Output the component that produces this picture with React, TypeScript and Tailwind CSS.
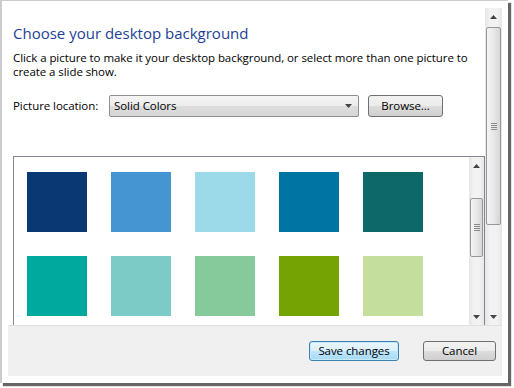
import React from "react";

const ROW_ONE = ["#0a3872", "#4495d1", "#9cd9e9", "#0074a2", "#0d6869"];
const ROW_TWO = ["#00a99d", "#7dcbc7", "#86c99a", "#74a303", "#c4de9e"];

const Arrow = ({ up }: { up: boolean }) => (
  <svg width="7" height="4" viewBox="0 0 7 4">
    <polygon points={up ? "0,4 7,4 3.5,0" : "0,0 7,0 3.5,4"} fill="#444" />
  </svg>
);

const Grip = () => (
  <div className="flex flex-col gap-[1px]">
    <div className="w-[6px] h-[1px] bg-[#8a8a8a]" />
    <div className="w-[6px] h-[1px] bg-[#8a8a8a]" />
    <div className="w-[6px] h-[1px] bg-[#8a8a8a]" />
    <div className="w-[6px] h-[1px] bg-[#8a8a8a]" />
  </div>
);

const ScrollBar = ({
  thumbTop,
  thumbHeight,
  className,
}: {
  thumbTop: number;
  thumbHeight: number;
  className: string;
}) => (
  <div className={`flex flex-col bg-[linear-gradient(90deg,#e6e6e6,#f2f2f2_30%,#f2f2f2_70%,#e6e6e6)] ${className}`}>
    <div className="h-[17px] flex items-center justify-center shrink-0">
      <Arrow up />
    </div>
    <div className="flex-1 px-[1px]">
      <div
        className="rounded-[2px] border border-[#979797] bg-[linear-gradient(90deg,#f4f4f4,#e8e8e8_50%,#d6d6d6)] flex items-center justify-center"
        style={{ marginTop: thumbTop, height: thumbHeight }}
      >
        <Grip />
      </div>
    </div>
    <div className="h-[17px] flex items-center justify-center shrink-0">
      <Arrow up={false} />
    </div>
  </div>
);

const Swatch = ({ color }: { color: string }) => (
  <div className="w-[60px] h-[60px]" style={{ backgroundColor: color }} />
);

export default function App() {
  return (
    <div className="w-[514px] h-[388px] bg-white overflow-hidden font-['Open_Sans',sans-serif] text-black">
      <div className="w-[508px] h-[383px] bg-white border-l-2 border-t border-[#cccccc] shadow-[3px_3px_1px_rgba(0,0,0,0.6)] flex flex-col px-[6px] pb-[7px]">
        <div className="flex flex-1 min-h-0">
          {/* main content */}
          <div className="flex-1 flex flex-col pl-[5px] pt-[22px]">
            <h1 className="text-[15px] leading-[20px] text-[#1e3f96]">
              Choose your desktop background
            </h1>
            <p className="mt-[8px] text-[11.5px] leading-[14px] tracking-[-0.07px] pr-[4px]">
              Click a picture to make it your desktop background, or select more than one picture to create a slide show.
            </p>
            <div className="mt-[16px] flex items-center h-[22px] text-[11.5px] tracking-[-0.07px]">
              <span className="w-[96px]">Picture location:</span>
              <div className="w-[250px] h-[22px] rounded-[2px] border border-[#8e8f8f] bg-[linear-gradient(180deg,#f5f5f5,#ececec_50%,#dddddd_51%,#d6d6d6)] flex items-center justify-between pl-[4px] pr-[6px]">
                <span>Solid Colors</span>
                <Arrow up={false} />
              </div>
              <div className="ml-[9px] w-[75px] h-[22px] rounded-[3px] border border-[#707070] bg-[linear-gradient(180deg,#f2f2f2,#ebebeb_50%,#dddddd_51%,#cfcfcf)] flex items-center justify-center">
                Browse...
              </div>
            </div>
            <div className="mt-[39px] flex-1 min-h-0 border-l border-t border-r border-[#828790] flex">
              <div className="flex-1 pl-[13px] pt-[15px] flex flex-col gap-[24px]">
                <div className="flex gap-[24px]">
                  {ROW_ONE.map((c) => (
                    <Swatch color={c} key={c} />
                  ))}
                </div>
                <div className="flex gap-[24px]">
                  {ROW_TWO.map((c) => (
                    <Swatch color={c} key={c} />
                  ))}
                </div>
              </div>
              <ScrollBar thumbTop={24} thumbHeight={59} className="w-[15px]" />
            </div>
          </div>
          {/* outer scroll bar */}
          <ScrollBar thumbTop={2} thumbHeight={198} className="w-[17px] mt-[7px]" />
        </div>
        {/* command area */}
        <div className="h-[51px] shrink-0 bg-[#f0f0f0] border-t border-[#dfdfdf] flex items-start justify-end gap-[24px] pt-[15px] pr-[6px] text-[11.5px] tracking-[-0.07px]">
          <div className="w-[90px] h-[20px] rounded-[3px] border border-[#3c7fb1] bg-[linear-gradient(180deg,#eaf6fd,#d9f0fc_50%,#bee6fd_51%,#a7d9f5)] shadow-[inset_0_0_0_1px_#c8e9fa] flex items-center justify-center">
            Save changes
          </div>
          <div className="w-[73px] h-[20px] rounded-[3px] border border-[#707070] bg-[linear-gradient(180deg,#f2f2f2,#ebebeb_50%,#dddddd_51%,#cfcfcf)] flex items-center justify-center">
            Cancel
          </div>
        </div>
      </div>
    </div>
  );
}
